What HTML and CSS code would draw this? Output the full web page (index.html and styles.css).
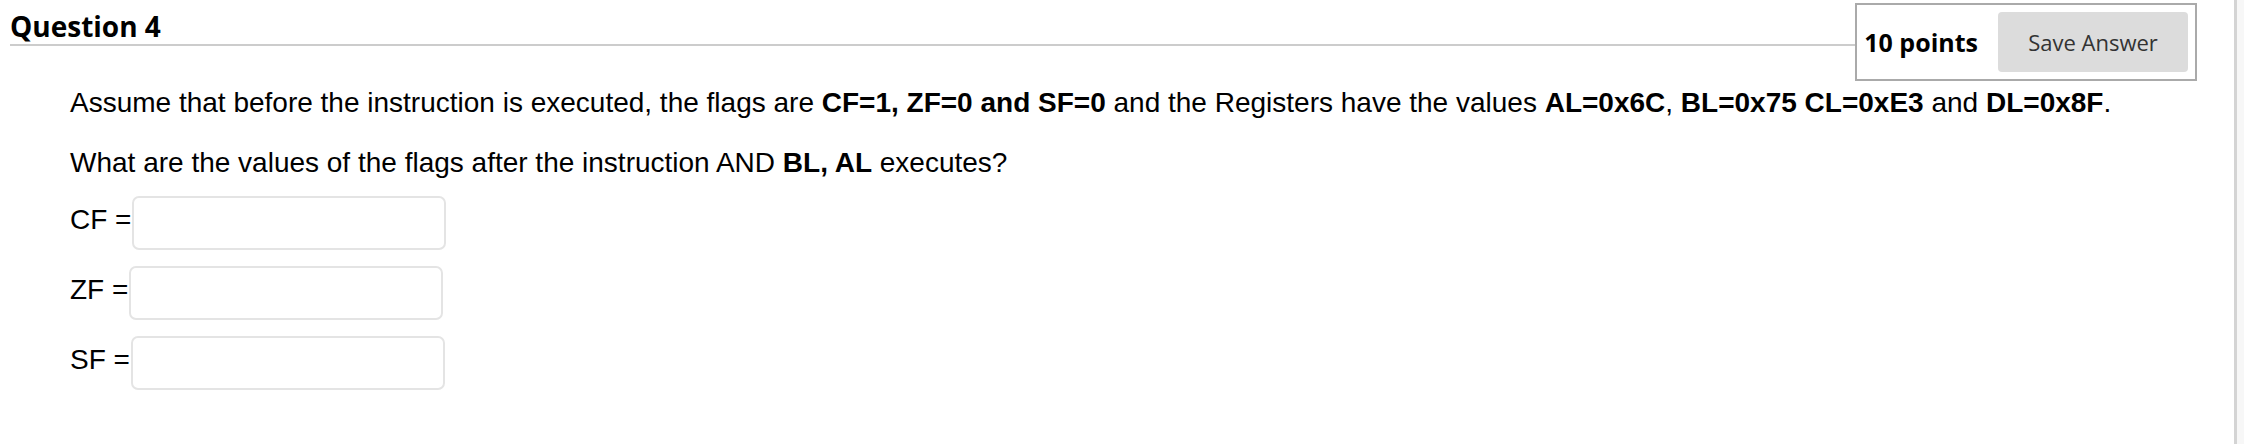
FILE: index.html
```html
<!DOCTYPE html>
<html lang="en">
<head>
<meta charset="utf-8">
<title>Question 4</title>
<link rel="stylesheet" href="styles.css">
</head>
<body>
<div class="page">
  <div class="header">
    <div class="title">Question 4</div>
    <div class="points-box">
      <span class="points">10 points</span>
      <button class="save" type="button">Save Answer</button>
    </div>
  </div>
  <div class="content">
    <p class="para">Assume that before the instruction is executed, the flags are <b>CF=1, ZF=0 and SF=0</b> and the Registers have the values <b>AL=0x6C</b>, <b>BL=0x75 CL=0xE3</b> and <b>DL=0x8F</b>.</p>
    <p class="para">What are the values of the flags after the instruction AND <b>BL, AL</b> executes?</p>
    <div class="rows">
      <label class="row"><span class="lbl">CF =</span><input class="field" type="text"></label>
      <label class="row"><span class="lbl">ZF =</span><input class="field" type="text"></label>
      <label class="row"><span class="lbl">SF =</span><input class="field" type="text"></label>
    </div>
  </div>
</div>
<div class="track"></div>
</body>
</html>
```

FILE: styles.css
```css
html, body {
  margin: 0;
  padding: 0;
  background: #ffffff;
}
body {
  display: flex;
  height: 444px;
  overflow: hidden;
}
.page {
  flex: 1;
  min-width: 0;
}
.track {
  width: 7px;
  border-left: 3px solid #d4d4d4;
  background: #f7f7f7;
}
.header {
  display: flex;
  align-items: flex-start;
  padding: 0 37px 0 10px;
}
.title {
  flex: 1;
  height: 36px;
  padding-top: 8px;
  line-height: 36px;
  border-bottom: 2px solid #cccccc;
  font-family: "Open Sans", sans-serif;
  font-weight: 700;
  font-size: 28px;
  color: #000;
}
.points-box {
  margin-top: 3px;
  border: 2px solid #aaaaaa;
  padding: 7px 7px 7px 7px;
  display: flex;
  align-items: center;
  gap: 20px;
  background: #fff;
}
.points {
  font-family: "Open Sans", sans-serif;
  font-weight: 700;
  font-size: 25px;
  color: #000;
}
.save {
  width: 190px;
  height: 60px;
  border: none;
  border-radius: 4px;
  background: #dcdcdc;
  font-family: "Open Sans", sans-serif;
  font-size: 22px;
  color: #333333;
  padding: 0;
}
.content {
  padding-left: 70px;
  font-family: "Liberation Sans", Arial, sans-serif;
  font-size: 28px;
  color: #000;
}
.para {
  margin: 7px 0 30px 0;
  line-height: 30px;
}
.para + .para {
  margin-top: 0;
  margin-bottom: 18px;
}
.rows {
  display: flex;
  flex-direction: column;
  gap: 16px;
}
.row {
  display: flex;
  align-items: center;
}
.lbl {
  margin-top: -6px;
}
.field {
  width: 314px;
  height: 54px;
  box-sizing: border-box;
  margin-left: 1px;
  border: 2px solid #e4e4e4;
  border-radius: 7px;
  background: #fff;
  font-size: 22px;
}
```
